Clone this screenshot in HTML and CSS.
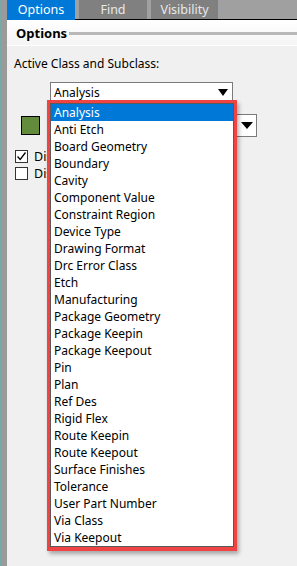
FILE: index.html
```html
<!DOCTYPE html>
<html lang="en">
<head>
    <meta charset="UTF-8">
    <meta name="viewport" content="width=device-width, initial-scale=1.0">
    <title>Options</title>
    <link rel="stylesheet" href="styles.css">
</head>
<body>
    <div class="edge"></div>
    <div class="gutter"></div>

    <div class="panel">
        <div class="tabs">
            <div class="tab active">Options</div>
            <div class="tab">Find</div>
            <div class="tab">Visibility</div>
        </div>

        <div class="section-head">
            <h2>Options</h2>
            <div class="rule"></div>
        </div>

        <div class="content">
            <div class="label">Active Class and Subclass:</div>

            <div class="combo combo-class">
                <span>Analysis</span>
                <span class="arrow"></span>
            </div>

            <div class="row">
                <div class="swatch"></div>
                <div class="combo combo-sub">
                    <span></span>
                    <span class="arrow"></span>
                </div>
            </div>

            <div class="check-row">
                <span class="check checked">
                    <svg width="11" height="11" viewBox="0 0 11 11"><path d="M1.5 5.5 L4.2 8.5 L9.5 1.5" fill="none" stroke="#000" stroke-width="1.3"/></svg>
                </span>
                <span class="check-text">Display Segments</span>
            </div>
            <div class="check-row">
                <span class="check"></span>
                <span class="check-text">Display Anchors</span>
            </div>
        </div>
    </div>

    <!-- dropdown list, open over the form -->
    <div class="popup">
        <ul class="list">
            <li class="selected">Analysis</li>
            <li>Anti Etch</li>
            <li>Board Geometry</li>
            <li>Boundary</li>
            <li>Cavity</li>
            <li>Component Value</li>
            <li>Constraint Region</li>
            <li>Device Type</li>
            <li>Drawing Format</li>
            <li>Drc Error Class</li>
            <li>Etch</li>
            <li>Manufacturing</li>
            <li>Package Geometry</li>
            <li>Package Keepin</li>
            <li>Package Keepout</li>
            <li>Pin</li>
            <li>Plan</li>
            <li>Ref Des</li>
            <li>Rigid Flex</li>
            <li>Route Keepin</li>
            <li>Route Keepout</li>
            <li>Surface Finishes</li>
            <li>Tolerance</li>
            <li>User Part Number</li>
            <li>Via Class</li>
            <li>Via Keepout</li>
        </ul>
    </div>
</body>
</html>
```

FILE: styles.css
```css
body {
    font-family: "Noto Sans", "Open Sans", sans-serif;
    font-size: 12px;
    color: #000;
    margin: 0;
    padding: 0;
    height: 566px;
    display: flex;
    background-color: #f0f0f0;
    overflow: hidden;
}

.edge {
    width: 2px;
    background: #78a8a8;
}

.gutter {
    width: 5px;
    background: #9a9a9a;
}

.panel {
    flex: 1;
    display: flex;
    flex-direction: column;
}

/* tab strip */
.tabs {
    height: 20px;
    display: flex;
    gap: 4px;
    background: #a0a0a0;
    box-shadow: inset 0 -1px 0 #000;
}

.tab {
    width: 68px;
    height: 19px;
    line-height: 19px;
    text-align: center;
    background: #808080;
    color: #e8e8e8;
    font-size: 12.5px;
}

.tab.active {
    height: 20px;
    background: #0078d7;
    color: #fff;
}

.tab:last-child {
    width: 67px;
}

/* section header */
.section-head {
    height: 25px;
    display: flex;
    align-items: center;
    padding-left: 9px;
    background: linear-gradient(#ffffff, #f5f5f5);
    border-bottom: 1px solid #ffffff;
}

.section-head h2 {
    margin: 0;
    font-size: 13px;
    font-weight: bold;
    line-height: 16px;
}

.section-head .rule {
    flex: 1;
    height: 3px;
    margin-left: 2px;
    margin-top: 1px;
    background: #b8b8b8;
}

.content {
    padding: 10px 0 0 7px;
}

.label {
    line-height: 16px;
    height: 16px;
}

.combo {
    height: 20px;
    box-sizing: border-box;
    border: 1px solid #7a7a7a;
    background: #fff;
    display: flex;
    align-items: center;
    justify-content: space-between;
    padding-left: 3px;
}

.combo .arrow {
    width: 0;
    height: 0;
    border-left: 5px solid transparent;
    border-right: 5px solid transparent;
    border-top: 7px solid #000;
    margin-right: 4px;
}

.combo-class {
    width: 183px;
    margin: 10px 0 0 36px;
}

.row {
    height: 23px;
    margin-top: 12px;
    display: flex;
    align-items: center;
}

.swatch {
    width: 17px;
    height: 17px;
    border: 1px solid #000;
    background: #628b3b;
    margin-left: 7px;
}

.combo-sub {
    width: 207px;
    height: 23px;
    margin-left: 10px;
}

.combo-sub .arrow {
    border-left-width: 6px;
    border-right-width: 6px;
    margin-right: 3px;
}

.check-row {
    height: 17px;
    display: flex;
    align-items: center;
    margin-left: 1px;
}

.row + .check-row {
    margin-top: 11px;
}

.check {
    width: 13px;
    height: 13px;
    box-sizing: border-box;
    border: 1px solid #333;
    background: #fff;
    display: flex;
    align-items: center;
    justify-content: center;
}

/* the rest of the caption sits under the open list */
.check-text {
    margin-left: 6px;
    font-size: 12.5px;
    width: 13px;
    overflow: hidden;
    white-space: nowrap;
}

/* open dropdown */
.popup {
    position: absolute;
    left: 47px;
    top: 100px;
    width: 190px;
    box-sizing: border-box;
    border: 3px solid #f04444;
    border-bottom-width: 4px;
    box-shadow: 2px 3px 4px rgba(0, 0, 0, 0.3);
}

.list {
    list-style: none;
    margin: 0;
    padding: 0;
    background: #fff;
    border: 1px solid #5a5a5a;
}

.list li {
    height: 17px;
    line-height: 17px;
    padding-left: 3px;
    white-space: nowrap;
}

.list li.selected {
    background: #0078d7;
    color: #fff;
}
```
